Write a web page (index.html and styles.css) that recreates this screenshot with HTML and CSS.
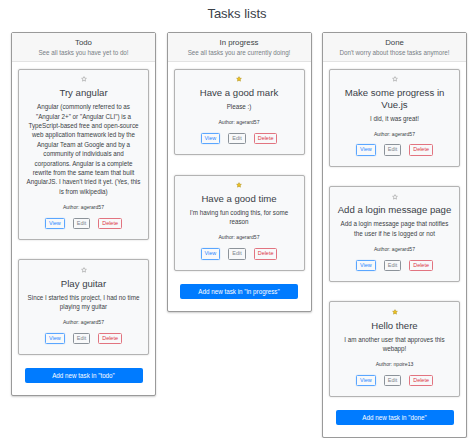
FILE: index.html
```html
<!DOCTYPE html>
<html lang="en">
<head>
<meta charset="utf-8">
<title>Tasks lists</title>
<link rel="stylesheet" href="styles.css">
</head>
<body>
<h2 class="page-title">Tasks lists</h2>
<div class="board">
  <section class="column">
    <header class="column-header">
      <div class="column-title">Todo</div>
      <div class="column-sub">See all tasks you have yet to do!</div>
    </header>
    <div class="column-body">
      <div class="card-list">
        <article class="task-card">
          <svg class="star" viewBox="0 0 24 24"><path class="star-off" d="M12 2.5l2.9 6.1 6.6.8-4.9 4.6 1.3 6.6L12 17.3l-5.9 3.3 1.3-6.6-4.9-4.6 6.6-.8z"/></svg>
          <h4 class="task-title">Try angular</h4>
          <p class="task-text">Angular (commonly referred to as "Angular 2+" or "Angular CLI") is a TypeScript-based free and open-source web application framework led by the Angular Team at Google and by a community of individuals and corporations. Angular is a complete rewrite from the same team that built AngularJS. I haven't tried it yet. (Yes, this is from wikipedia)</p>
          <p class="task-author">Author: agerard57</p>
          <div class="actions"><button class="btn btn-view">View</button><button class="btn btn-edit">Edit</button><button class="btn btn-delete">Delete</button></div>
        </article>
        <article class="task-card">
          <svg class="star" viewBox="0 0 24 24"><path class="star-off" d="M12 2.5l2.9 6.1 6.6.8-4.9 4.6 1.3 6.6L12 17.3l-5.9 3.3 1.3-6.6-4.9-4.6 6.6-.8z"/></svg>
          <h4 class="task-title">Play guitar</h4>
          <p class="task-text">Since I started this project, I had no time playing my guitar</p>
          <p class="task-author">Author: agerard57</p>
          <div class="actions"><button class="btn btn-view">View</button><button class="btn btn-edit">Edit</button><button class="btn btn-delete">Delete</button></div>
        </article>
      </div>
      <button class="add-btn">Add new task in "todo"</button>
    </div>
  </section>
  <section class="column">
    <header class="column-header">
      <div class="column-title">In progress</div>
      <div class="column-sub">See all tasks you are currently doing!</div>
    </header>
    <div class="column-body">
      <div class="card-list">
        <article class="task-card">
          <svg class="star" viewBox="0 0 24 24"><path class="star-on" d="M12 2.5l2.9 6.1 6.6.8-4.9 4.6 1.3 6.6L12 17.3l-5.9 3.3 1.3-6.6-4.9-4.6 6.6-.8z"/></svg>
          <h4 class="task-title">Have a good mark</h4>
          <p class="task-text">Please :)</p>
          <p class="task-author">Author: agerard57</p>
          <div class="actions"><button class="btn btn-view">View</button><button class="btn btn-edit">Edit</button><button class="btn btn-delete">Delete</button></div>
        </article>
        <article class="task-card">
          <svg class="star" viewBox="0 0 24 24"><path class="star-on" d="M12 2.5l2.9 6.1 6.6.8-4.9 4.6 1.3 6.6L12 17.3l-5.9 3.3 1.3-6.6-4.9-4.6 6.6-.8z"/></svg>
          <h4 class="task-title">Have a good time</h4>
          <p class="task-text">I'm having fun coding this, for some reason</p>
          <p class="task-author">Author: agerard57</p>
          <div class="actions"><button class="btn btn-view">View</button><button class="btn btn-edit">Edit</button><button class="btn btn-delete">Delete</button></div>
        </article>
      </div>
      <button class="add-btn">Add new task in "in progress"</button>
    </div>
  </section>
  <section class="column">
    <header class="column-header">
      <div class="column-title">Done</div>
      <div class="column-sub">Don't worry about those tasks anymore!</div>
    </header>
    <div class="column-body">
      <div class="card-list">
        <article class="task-card">
          <svg class="star" viewBox="0 0 24 24"><path class="star-off" d="M12 2.5l2.9 6.1 6.6.8-4.9 4.6 1.3 6.6L12 17.3l-5.9 3.3 1.3-6.6-4.9-4.6 6.6-.8z"/></svg>
          <h4 class="task-title">Make some progress in Vue.js</h4>
          <p class="task-text">I did, it was great!</p>
          <p class="task-author">Author: agerard57</p>
          <div class="actions"><button class="btn btn-view">View</button><button class="btn btn-edit">Edit</button><button class="btn btn-delete">Delete</button></div>
        </article>
        <article class="task-card">
          <svg class="star" viewBox="0 0 24 24"><path class="star-off" d="M12 2.5l2.9 6.1 6.6.8-4.9 4.6 1.3 6.6L12 17.3l-5.9 3.3 1.3-6.6-4.9-4.6 6.6-.8z"/></svg>
          <h4 class="task-title">Add a login message page</h4>
          <p class="task-text">Add a login message page that notifies the user if he is logged or not</p>
          <p class="task-author">Author: agerard57</p>
          <div class="actions"><button class="btn btn-view">View</button><button class="btn btn-edit">Edit</button><button class="btn btn-delete">Delete</button></div>
        </article>
        <article class="task-card">
          <svg class="star" viewBox="0 0 24 24"><path class="star-on" d="M12 2.5l2.9 6.1 6.6.8-4.9 4.6 1.3 6.6L12 17.3l-5.9 3.3 1.3-6.6-4.9-4.6 6.6-.8z"/></svg>
          <h4 class="task-title">Hello there</h4>
          <p class="task-text">I am another user that approves this webapp!</p>
          <p class="task-author">Author: npoire13</p>
          <div class="actions"><button class="btn btn-view">View</button><button class="btn btn-edit">Edit</button><button class="btn btn-delete">Delete</button></div>
        </article>
      </div>
      <button class="add-btn">Add new task in "done"</button>
    </div>
  </section>
</div>
</body>
</html>
```
FILE: styles.css
```css
body {
  margin: 0;
  font-family: "Liberation Sans", Arial, sans-serif;
  color: #3a3f45;
  background: #fff;
}

.page-title {
  margin: 0 0 10.4px;
  padding-top: 6px;
  font-size: 13px;
  line-height: 15.6px;
  font-weight: 400;
  text-align: center;
  color: #3a4047;
}

.board {
  display: flex;
  align-items: flex-start;
  gap: 10.5px;
  padding-left: 11px;
}

.column {
  width: 145px;
  box-sizing: border-box;
  border: 1px solid #9a9a9a;
  border-radius: 2px;
  box-shadow: 0 1px 2px rgba(0, 0, 0, 0.2);
  background: #fff;
}

.column-header {
  background: #f7f7f7;
  border-bottom: 1px solid #e3e3e3;
  padding: 5px 3px 3.3px;
  text-align: center;
}

.column-title {
  font-size: 7.8px;
  line-height: 9.4px;
  margin-bottom: 1px;
  color: #3a3f45;
}

.column-sub {
  font-size: 6.27px;
  line-height: 9.3px;
  color: #777e85;
}

.column-body {
  padding: 7px 6px 12px;
}

.card-list {
  display: flex;
  flex-direction: column;
  gap: 19.3px;
}

.task-card {
  background: #f8f9fa;
  border: 1px solid #b3b3b3;
  border-radius: 2px;
  box-shadow: 0 0 2px rgba(0, 0, 0, 0.18);
  padding: 6px 6px 10px;
  text-align: center;
}

.star {
  display: block;
  width: 6px;
  height: 6px;
  margin: 0.5px auto 4.75px;
}

.star-off {
  fill: none;
  stroke: #8a8a8a;
  stroke-width: 2;
  stroke-linejoin: round;
}

.star-on {
  fill: #f2c21b;
  stroke: #a88a10;
  stroke-width: 2;
  stroke-linejoin: round;
}

.task-title {
  margin: 0 0 3.5px;
  font-size: 9.6px;
  line-height: 11.5px;
  font-weight: 400;
  color: #3a4047;
}

.task-text {
  margin: 0 0 7.5px;
  font-size: 6.27px;
  line-height: 9.4px;
}

.task-author {
  margin: 0 0 6.25px;
  font-size: 5.1px;
  line-height: 7.5px;
}

.actions {
  display: flex;
  justify-content: center;
  gap: 8px;
}

.btn {
  font-family: "Liberation Sans", Arial, sans-serif;
  font-size: 5.46px;
  line-height: 7.5px;
  padding: 1px 3px;
  border: 1px solid;
  border-radius: 1.5px;
  background: transparent;
  margin: 0;
}

.btn-view {
  color: #2a86ff;
  border-color: #5aa6ff;
  box-shadow: 0 0 1px rgba(0, 123, 255, 0.5);
}

.btn-edit {
  color: #7a828a;
  border-color: #8c939a;
}

.btn-delete {
  color: #dc3545;
  border-color: #e27480;
}

.add-btn {
  display: block;
  width: 118px;
  height: 15px;
  margin: 13px auto 0;
  padding: 0;
  border: none;
  border-radius: 2px;
  background: #007bff;
  color: #fff;
  font-family: "Liberation Sans", Arial, sans-serif;
  font-size: 6.27px;
}
```
